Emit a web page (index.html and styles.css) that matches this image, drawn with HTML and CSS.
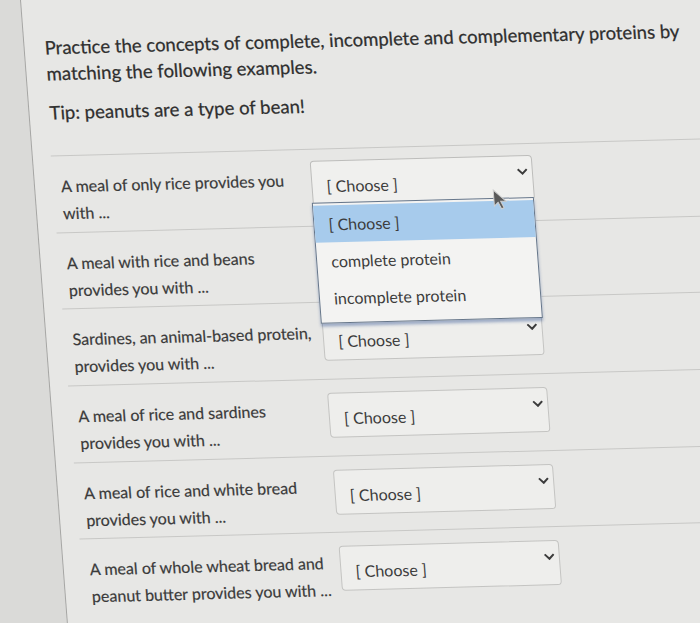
FILE: index.html
```html
<!DOCTYPE html>
<html lang="en">
<head>
<meta charset="utf-8">
<title>Matching proteins</title>
<link rel="stylesheet" href="styles.css">
</head>
<body>
<div class="viewport">
<div class="page">
  <div class="intro">
    <p class="lead">Practice the concepts of complete, incomplete and complementary proteins by matching the following examples.</p>
    <p class="tip">Tip: peanuts are a type of bean!</p>
  </div>
  <div class="rows">
    <div class="row">
      <div class="label">A meal of only rice provides you with ...</div>
      <div class="select open">
        <span class="value">[ Choose ]</span>
        <svg class="chev" width="11" height="7" viewBox="0 0 11 7"><path d="M1 1l4.5 4.5L10 1" fill="none" stroke="#3c3c3c" stroke-width="2"/></svg>
        <ul class="menu">
          <li class="hl">[ Choose ]</li>
          <li>complete protein</li>
          <li>incomplete protein</li>
        </ul>
        <svg class="cursor" width="16" height="22" viewBox="0 0 16 22"><path d="M1 1v16l4-3.6 3 6.6 2.6-1.1-3-6.4H13z" fill="#5a5a5a" stroke="#cfcfcf" stroke-width="1"/></svg>
      </div>
    </div>
    <div class="row">
      <div class="label">A meal with rice and beans provides you with ...</div>
      <div class="select">
        <span class="value">[ Choose ]</span>
      </div>
    </div>
    <div class="row">
      <div class="label">Sardines, an animal-based protein, provides you with ...</div>
      <div class="select">
        <span class="value">[ Choose ]</span>
        <svg class="chev" width="11" height="7" viewBox="0 0 11 7"><path d="M1 1l4.5 4.5L10 1" fill="none" stroke="#3c3c3c" stroke-width="2"/></svg>
      </div>
    </div>
    <div class="row">
      <div class="label">A meal of rice and sardines provides you with ...</div>
      <div class="select">
        <span class="value">[ Choose ]</span>
        <svg class="chev" width="11" height="7" viewBox="0 0 11 7"><path d="M1 1l4.5 4.5L10 1" fill="none" stroke="#3c3c3c" stroke-width="2"/></svg>
      </div>
    </div>
    <div class="row">
      <div class="label">A meal of rice and white bread provides you with ...</div>
      <div class="select">
        <span class="value">[ Choose ]</span>
        <svg class="chev" width="11" height="7" viewBox="0 0 11 7"><path d="M1 1l4.5 4.5L10 1" fill="none" stroke="#3c3c3c" stroke-width="2"/></svg>
      </div>
    </div>
    <div class="row">
      <div class="label">A meal of whole wheat bread and peanut butter provides you with ...</div>
      <div class="select">
        <span class="value">[ Choose ]</span>
        <svg class="chev" width="11" height="7" viewBox="0 0 11 7"><path d="M1 1l4.5 4.5L10 1" fill="none" stroke="#3c3c3c" stroke-width="2"/></svg>
      </div>
    </div>
  </div>
</div>
</div>
</body>
</html>
```
FILE: styles.css
```css
html, body {
  margin: 0;
  padding: 0;
  overflow: hidden;
}
body {
  background: #dadad8;
  font-family: Lato, "Open Sans", sans-serif;
  color: #333333;
}
.viewport {
  width: 700px;
  height: 623px;
  overflow: hidden;
}
.page {
  margin-left: 20px;
  width: 720px;
  height: 680px;
  border-left: 1px solid #a5a5a3;
  background: #e7e7e5;
  padding-left: 18px;
  box-sizing: border-box;
  transform: skew(4.3deg, -1.5deg);
  transform-origin: 0 0;
}
.intro {
  padding: 35px 0 0 2px;
}
.lead {
  margin: 0;
  font-size: 18.5px;
  line-height: 26px;
  width: 650px;
  color: #2f2f2f;
  -webkit-text-stroke: 0.25px #2f2f2f;
}
.tip {
  margin: 13px 0 0 0;
  font-size: 18.5px;
  line-height: 26px;
  color: #2f2f2f;
  -webkit-text-stroke: 0.25px #2f2f2f;
}
.rows {
  margin-top: 30px;
}
.row {
  display: flex;
  align-items: flex-start;
  border-top: 1px solid #c8c8c6;
  height: 76.7px;
  box-sizing: border-box;
}
.label {
  width: 242px;
  padding: 16px 0 0 8px;
  margin-right: 8px;
  font-size: 16px;
  line-height: 27px;
  color: #3a3a3a;
  -webkit-text-stroke: 0.2px #3a3a3a;
}
.select {
  position: relative;
  margin-top: 13px;
  width: 220px;
  height: 45px;
  box-sizing: border-box;
  border: 1px solid #c4c4c2;
  border-radius: 4px;
  background: #eeeeec;
  display: flex;
  align-items: center;
  padding: 6px 0 0 14px;
  font-size: 16px;
  color: #3c3c3c;
}
.select.open {
  margin-top: 11px;
  width: 222px;
  background: #f0f0ee;
  border-color: #bdbdbb;
}
.chev {
  position: absolute;
  right: 4px;
  top: 12px;
}
.menu {
  position: absolute;
  top: 41px;
  left: -2px;
  width: 222px;
  box-sizing: border-box;
  margin: 0;
  padding: 2px 0 6px;
  list-style: none;
  background: #f3f3f2;
  border: 1.5px solid #66768a;
  box-shadow: 0 3px 3px rgba(60, 90, 150, 0.45);
  z-index: 5;
}
.menu li {
  height: 37px;
  line-height: 37px;
  padding-left: 14px;
  font-size: 16px;
  color: #3c3c3c;
}
.menu li.hl {
  background: #a7cbec;
}
.cursor {
  position: absolute;
  left: 179px;
  top: 32px;
  z-index: 6;
}
```
